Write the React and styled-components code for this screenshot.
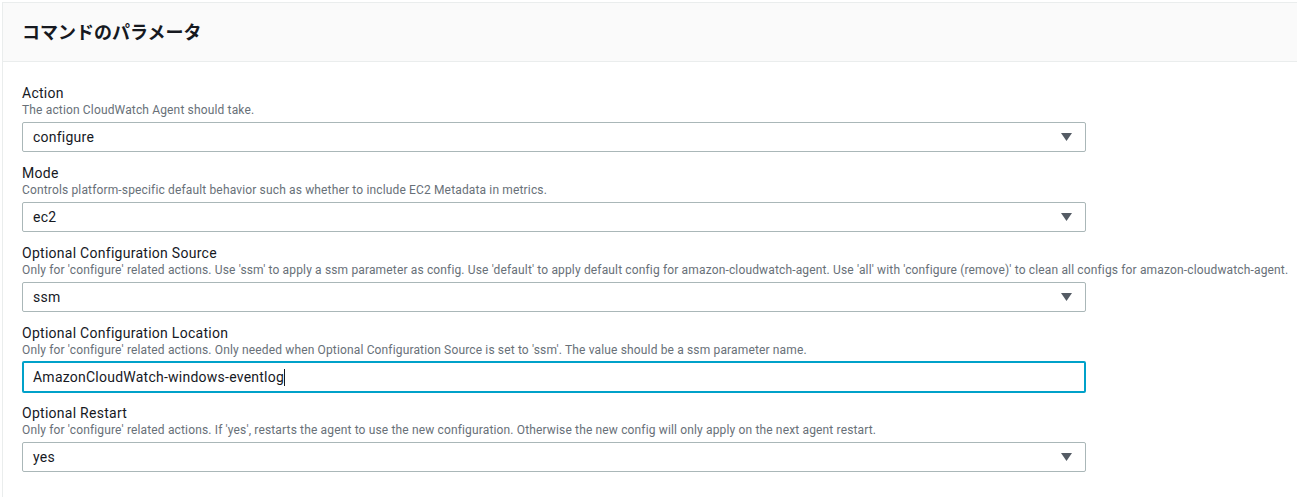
import React from 'react';
import styled, { createGlobalStyle } from 'styled-components';

const GlobalStyle = createGlobalStyle`
  html, body {
    margin: 0;
    background: #ffffff;
  }
  body {
    font-family: Roboto, "Noto Sans", Arial, sans-serif;
    color: #16191f;
  }
`;

const fields = [
  {
    label: 'Action',
    description: 'The action CloudWatch Agent should take.',
    value: 'configure',
    type: 'select',
  },
  {
    label: 'Mode',
    description: 'Controls platform-specific default behavior such as whether to include EC2 Metadata in metrics.',
    value: 'ec2',
    type: 'select',
  },
  {
    label: 'Optional Configuration Source',
    description:
      "Only for 'configure' related actions. Use 'ssm' to apply a ssm parameter as config. Use 'default' to apply default config for amazon-cloudwatch-agent. Use 'all' with 'configure (remove)' to clean all configs for amazon-cloudwatch-agent.",
    value: 'ssm',
    type: 'select',
  },
  {
    label: 'Optional Configuration Location',
    description:
      "Only for 'configure' related actions. Only needed when Optional Configuration Source is set to 'ssm'. The value should be a ssm parameter name.",
    value: 'AmazonCloudWatch-windows-eventlog',
    type: 'input',
  },
  {
    label: 'Optional Restart',
    description:
      "Only for 'configure' related actions. If 'yes', restarts the agent to use the new configuration. Otherwise the new config will only apply on the next agent restart.",
    value: 'yes',
    type: 'select',
  },
];

const CaretDown = () => (
  <svg width="11" height="8" viewBox="0 0 11 8" aria-hidden="true">
    <path d="M0 0 H11 L5.5 8 Z" fill="#545b64" />
  </svg>
);

const App = () => (
  <>
    <GlobalStyle />
    <Page>
      <Panel>
        <Header>
          <h2>コマンドのパラメータ</h2>
        </Header>
        <Body>
          {fields.map((field) => (
            <Field key={field.label}>
              <Label>{field.label}</Label>
              <Description>{field.description}</Description>
              {field.type === 'select' ? (
                <SelectBox>
                  <span>{field.value}</span>
                  <CaretDown />
                </SelectBox>
              ) : (
                <TextBox>
                  <span>{field.value}</span>
                  <Cursor />
                </TextBox>
              )}
            </Field>
          ))}
        </Body>
      </Panel>
    </Page>
  </>
);

export default App;

const Page = styled.div`
  box-sizing: border-box;
  height: 497px;
  overflow: hidden;
  padding: 2px 0 0 2px;
`;

const Panel = styled.section`
  box-sizing: border-box;
  height: 100%;
  border: 1px solid #eaeded;
  border-right: none;
  border-bottom: none;
  background: #ffffff;
`;

const Header = styled.header`
  background: #fafafa;
  border-bottom: 1px solid #eaeded;
  height: 58px;
  display: flex;
  align-items: center;
  padding: 0 19px;

  h2 {
    margin: 0;
    font-family: "Noto Sans CJK JP", "Noto Sans", sans-serif;
    font-size: 18px;
    font-weight: 700;
    color: #16191f;
    line-height: 1;
    padding-bottom: 2px;
  }
`;

const Body = styled.div`
  display: flex;
  flex-direction: column;
  gap: 12px;
  padding: 22px 19px 0;
`;

const Field = styled.div`
  display: flex;
  flex-direction: column;
`;

const Label = styled.div`
  font-size: 14px;
  line-height: 18px;
  letter-spacing: 0.27px;
  color: #16191f;
`;

const Description = styled.div`
  font-size: 12px;
  line-height: 16px;
  letter-spacing: 0.15px;
  color: #687078;
  white-space: nowrap;
  margin-bottom: 4px;
`;

const SelectBox = styled.div`
  box-sizing: border-box;
  width: 1064px;
  height: 30px;
  border: 1px solid #aab7b8;
  border-radius: 2px;
  display: flex;
  align-items: center;
  justify-content: space-between;
  padding: 0 13px 0 10px;
  font-size: 14px;
  letter-spacing: 0.24px;
  color: #16191f;
`;

const TextBox = styled.div`
  box-sizing: border-box;
  width: 1064px;
  height: 32px;
  margin: -1px 0;
  border: 2px solid #00a1c9;
  border-radius: 2px;
  display: flex;
  align-items: center;
  padding: 0 9px;
  font-size: 14px;
  letter-spacing: 0.24px;
  color: #16191f;
`;

const Cursor = styled.i`
  display: inline-block;
  width: 1px;
  height: 17px;
  background: #16191f;
`;
